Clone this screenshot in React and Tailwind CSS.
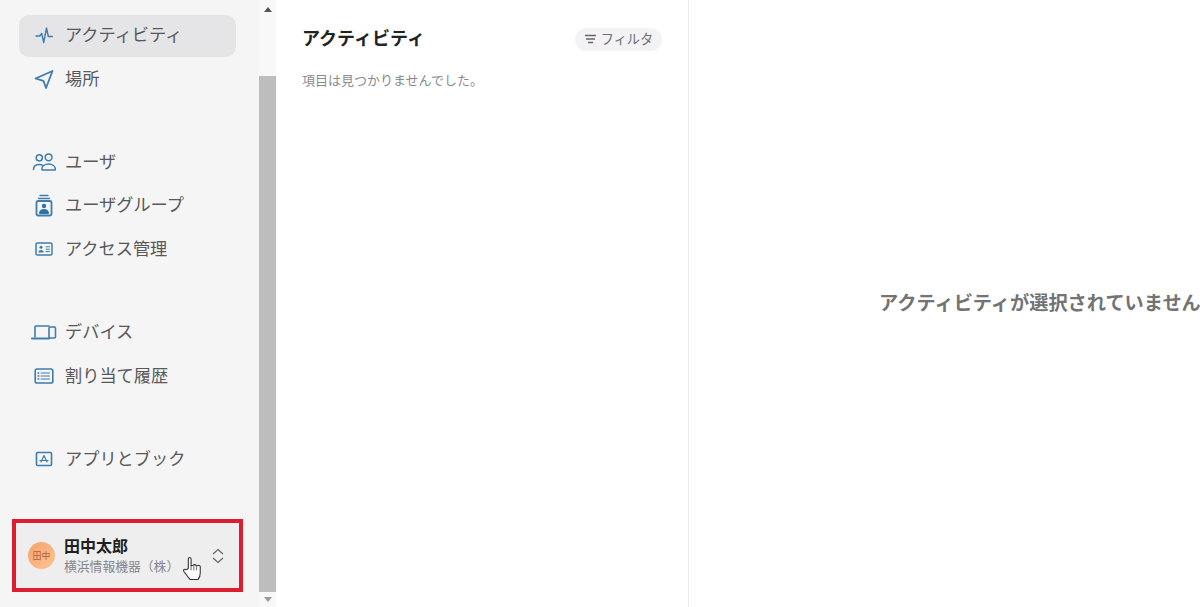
const Ico = ({ children, w = 24, h = 24, vb = "0 0 24 24", className = "" }) => (
  <svg width={w} height={h} viewBox={vb} fill="none" stroke="#3f7cab" strokeWidth="1.5" strokeLinecap="round" strokeLinejoin="round" className={className}>
    {children}
  </svg>
);

const ActivityI = () => (<Ico><path d="M4 13h3.700l2-2.500 2 9 2.800-14.500 1.800 8.500h4" strokeWidth="1.400" /></Ico>);
const PlaceI = () => (<Ico><path d="M3.500 11.500 20.500 4l-6.500 17-2.600-7.200z" strokeWidth="1.800" /></Ico>);
const UsersI = () => (<Ico><circle cx="7.300" cy="7.800" r="3.100" /><circle cx="16.600" cy="7.300" r="3.400" /><path d="M1.500 19.500c0-3.400 2.600-5 6-5 1.300 0 2.500.3 3.400.8" /><path d="M9.800 19.500c0-3.500 3-5.400 6.800-5.400s6.800 1.900 6.800 5.400c0 .3-.2.4-.5.4H10.300c-.3 0-.5-.1-.5-.4z" /></Ico>);
const GroupI = () => (<Ico><path d="M8 2.500h8M6.500 5.500h11" strokeWidth="1.300" /><rect x="4.500" y="8" width="15" height="14.500" rx="1.500" strokeWidth="1.800" /><circle cx="12" cy="13" r="2.200" fill="#2f72a6" stroke="none" /><path d="M7.200 21v-1.500c0-2 2.100-3.500 4.800-3.500s4.800 1.500 4.800 3.500V21z" fill="#2f72a6" stroke="none" /></Ico>);
const CardI = () => (<Ico><rect x="4" y="6" width="16" height="12" rx="1.300" /><circle cx="9" cy="10.300" r="1.500" fill="#3f7cab" stroke="none" /><path d="M6.300 15.500c0-1.600 1.200-2.500 2.700-2.500s2.700.9 2.700 2.500z" fill="#3f7cab" stroke="none" /><path d="M14 9.800h3.500M14 12.200h3.500M14 14.600h3.500" strokeWidth="1" /></Ico>);
const DeviceI = () => (<Ico w={26} h={24} vb="0 0 26 24"><path d="M4 17V6.800C4 6.300 4.300 6 4.800 6H18" strokeWidth="1.600" /><path d="M18 8.200c0-.7.400-1.200 1-1.200h4.500c.6 0 1 .5 1 1.200V17c0 .7-.4 1-1 1H18z" strokeWidth="1.600" /><path d="M1 18.500h17" strokeWidth="2" /></Ico>);
const ListI = () => (<Ico><rect x="3.200" y="5" width="17.600" height="14" rx="1.800" strokeWidth="1.600" /><path d="M9 9h8.500M9 12h8.500M9 15h8.500" strokeWidth="1.100" /><path d="M6 9h.9M6 12h.9M6 15h.9" strokeWidth="1.300" /></Ico>);
const AppI = () => (<Ico><rect x="4.500" y="5.500" width="15" height="13" rx="1" strokeWidth="1.600" /><path d="M12 8.500 9 15M12 8.500l3 6.500M8 13.500h8" strokeWidth="1.200" /></Ico>);

const Row = ({ icon, label, active, short }) => (
  <div className={`${short ? "h-[43px]" : "h-[44px]"} flex items-start`}>
    <div className={`w-[217px] h-[42px] mt-px rounded-[10px] flex items-center ${active ? "bg-[#e5e5e8]" : ""}`}>
      <div className="w-[46px] flex justify-center pl-[4px] mb-[2px] shrink-0">{icon}</div>
      <span className="text-[17.200px] mb-[5px] text-[#58585b]">{label}</span>
    </div>
  </div>
);

const Group = ({ children }) => <div className="mb-[39px]">{children}</div>;

export default function App() {
  return (
    <div className="h-[607px] w-[1200px] flex overflow-hidden bg-white" style={{ fontFamily: '"Noto Sans CJK JP", "Noto Sans", sans-serif' }}>
      <aside className="w-[259px] shrink-0 bg-[#f5f5f6] flex flex-col pl-[19px] pt-[14px]">
        <Group>
          <Row active icon={<ActivityI />} label="アクティビティ" />
          <Row icon={<PlaceI />} label="場所" />
        </Group>
        <Group>
          <Row short icon={<UsersI />} label="ユーザ" />
          <Row icon={<GroupI />} label="ユーザグループ" />
          <Row icon={<CardI />} label="アクセス管理" />
        </Group>
        <Group>
          <Row icon={<DeviceI />} label="デバイス" />
          <Row icon={<ListI />} label="割り当て履歴" />
        </Group>
        <Row short icon={<AppI />} label="アプリとブック" />
        <div className="relative mt-auto mb-[15px] -ml-[7px] w-[231px] h-[73px] border-[4px] border-[#dc1f2e] bg-[#eeeeef] flex items-center pl-[12px]">
          <div className="w-[27px] h-[27px] rounded-full bg-gradient-to-br from-[#f7a26d] to-[#fcc58f] flex items-center justify-center text-[9px] text-[#b0623a] shrink-0">田中</div>
          <div className="ml-[9px] flex flex-col -mt-[3px]">
            <span className="text-[16px] leading-[22px] font-bold text-[#1f1f1f]">田中太郎</span>
            <span className="text-[12.800px] leading-[19px] text-[#85858c] whitespace-nowrap">横浜情報機器（株）</span>
          </div>
          <svg width="14" height="16" viewBox="0 0 14 16" fill="none" stroke="#666" strokeWidth="1.200" className="absolute left-[195px] top-[25px]">
            <path d="M2 6l5-4.500L12 6M2 10l5 4.500L12 10" />
          </svg>
          <svg width="22" height="27" viewBox="0 0 24 28" className="absolute left-[165px] top-[32px]" fill="#fff" stroke="#333" strokeWidth="1.200" strokeLinejoin="round">
            <path d="M8 14V3.500c0-2 3-2 3 0V11l2.500-.5c.3-1 2.600-1 2.800.2l2 .3c.4-.7 2.500-.6 2.700 1V19c0 3-1.500 6-2.500 7H10c-2-2-4-5-7-9-1-1.500 1-3 2.500-1.500z" />
            <path d="M11 11v5M14 11v5M17 11v5" strokeWidth="0.800" />
          </svg>
        </div>
      </aside>

      <div className="w-[17px] shrink-0 bg-[#f8f8f8] flex flex-col items-center">
        <div className="h-[76px] w-full flex justify-center pt-[7px]">
          <div className="w-0 h-0 border-l-[4px] border-r-[4px] border-b-[5px] border-l-transparent border-r-transparent border-b-[#555]" />
        </div>
        <div className="flex-1 w-full bg-[#bdbdbd]" />
        <div className="h-[15px] w-full flex justify-center pt-[5px]">
          <div className="w-0 h-0 border-l-[4px] border-r-[4px] border-t-[5px] border-l-transparent border-r-transparent border-t-[#999]" />
        </div>
      </div>

      <main className="w-[413px] shrink-0 border-r border-[#ececee] pl-[26px] pr-[26px] pt-[24px]">
        <div className="flex items-center justify-between h-[30px]">
          <h1 className="text-[18px] font-bold text-[#222] mb-[4px]">アクティビティ</h1>
          <div className="h-[23px] w-[87px] rounded-full bg-[#f3f3f5] flex items-center justify-center gap-[4px] text-[13.200px] text-[#6e6e73]">
            <svg width="13" height="10" viewBox="0 0 13 10" fill="none" stroke="#666" strokeWidth="1.300"><path d="M1 1.500h11M2 5h9M4 8.500h5" /></svg>
            フィルタ
          </div>
        </div>
        <p className="mt-[16px] text-[13px] text-[#8a8a8f]">項目は見つかりませんでした。</p>
      </main>

      <section className="flex-1 min-w-0 overflow-hidden flex items-center pl-[190px] pb-[2px]">
        <span className="text-[19.200px] font-bold text-[#737373] whitespace-nowrap">アクティビティが選択されていません</span>
      </section>
    </div>
  );
}
